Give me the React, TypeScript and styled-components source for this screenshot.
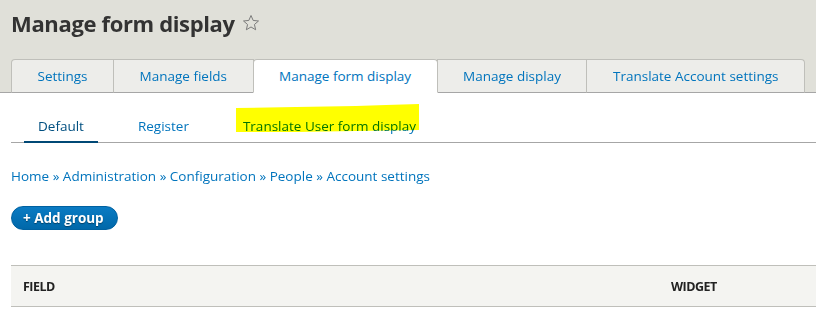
import React from "react";
import styled, { createGlobalStyle } from "styled-components";

const Global = createGlobalStyle`
  html, body { margin: 0; padding: 0; background: #fff; }
  body { font-family: "Open Sans", "Noto Sans", sans-serif; color: #333; }
  * { box-sizing: border-box; }
`;

const Page = styled.div`
  width: 816px;
  height: 320px;
  overflow: hidden;
  background: #fff;
`;

const Header = styled.header`
  background: #e0e0d9;
  border-bottom: 1px solid #a6a6a6;
  padding: 8px 0 0 11px;
`;

const TitleRow = styled.div`
  display: flex;
  align-items: center;
  gap: 7px;
  height: 30px;
`;

const Title = styled.h1`
  margin: 0;
  font-size: 22px;
  font-weight: 700;
  color: #333;
  letter-spacing: -0.35px;
`;

const PrimaryTabs = styled.ul`
  display: flex;
  list-style: none;
  margin: 21px 0 -1px 0;
  padding: 0;
`;

const PrimaryTab = styled.li<{ $active?: boolean; $first?: boolean; $last?: boolean }>`
  height: 34px;
  display: flex;
  align-items: center;
  justify-content: center;
  padding: 0 25.5px;
  font-size: 13.5px;
  color: #0074bd;
  background: ${(p) => (p.$active ? "#fff" : "#ededea")};
  border: 1px solid #bfbfba;
  border-bottom: ${(p) => (p.$active ? "1px solid #fff" : "1px solid #a6a6a6")};
  margin-left: ${(p) => (p.$first ? "0" : "-1px")};
  border-top-left-radius: ${(p) => (p.$first || p.$active ? "4px" : "0")};
  border-top-right-radius: ${(p) => (p.$last || p.$active ? "4px" : "0")};
  position: relative;
  z-index: ${(p) => (p.$active ? 1 : 0)};
`;

const Secondary = styled.ul`
  display: flex;
  list-style: none;
  margin: 0 0 0 11px;
  padding: 0 0 0 13px;
  gap: 26px;
  height: 50px;
  border-bottom: 1px solid #a6a6a6;
`;

const SecondaryTab = styled.li<{ $active?: boolean }>`
  position: relative;
  display: flex;
  align-items: center;
  padding: 18px 14px 0;
  font-size: 13.5px;
  color: ${(p) => (p.$active ? "#004f80" : "#0074bd")};
  border-bottom: ${(p) => (p.$active ? "2px solid #004875" : "2px solid transparent")};
  margin-bottom: -1px;
`;

const Highlight = styled.svg`
  position: absolute;
  left: 7px;
  top: 11px;
  width: 184px;
  height: 30px;
  mix-blend-mode: multiply;
  pointer-events: none;
`;

const Content = styled.div`
  padding: 0 0 0 11px;
`;

const Breadcrumb = styled.nav`
  margin-top: 24px;
  font-size: 13.5px;
  color: #0074bd;
  height: 18px;
  line-height: 18px;
`;

const Button = styled.button`
  margin-top: 21px;
  height: 24px;
  padding: 0 13px 1px 11px;
  border: 1px solid #0061a0;
  border-radius: 12px;
  background: linear-gradient(#0a7bc3, #0068a9);
  color: #fff;
  font-family: "Open Sans", sans-serif;
  font-weight: 700;
  font-size: 13.5px;
  text-shadow: 0 1px 1px rgba(0,0,0,0.4);
  display: flex;
  align-items: center;
  gap: 3px;
`;

const Table = styled.div`
  margin-top: 35px;
  height: 42px;
  background: #f4f4f1;
  border-top: 1px solid #bfbfba;
  border-bottom: 1px solid #bfbfba;
  display: grid;
  grid-template-columns: 648px 1fr;
  align-items: center;
  padding-left: 12px;
`;

const Th = styled.span`
  font-family: "Open Sans", sans-serif;
  font-weight: 700;
  font-size: 12.5px;
  letter-spacing: -0.5px;
  color: #222;
  text-transform: uppercase;
`;

const Star = () => (
  <svg width="18" height="18" viewBox="0 0 24 24" fill="none" stroke="#777" strokeWidth="1.3" strokeLinejoin="round">
    <polygon points="12,2 14.9,8.6 22,9.3 16.6,14 18.2,21 12,17.3 5.8,21 7.4,14 2,9.3 9.1,8.6" />
  </svg>
);

export default function App() {
  return (
    <Page>
      <Global />
      <Header>
        <TitleRow>
          <Title>Manage form display</Title>
          <Star />
        </TitleRow>
        <PrimaryTabs>
          <PrimaryTab $first>Settings</PrimaryTab>
          <PrimaryTab>Manage fields</PrimaryTab>
          <PrimaryTab $active>Manage form display</PrimaryTab>
          <PrimaryTab>Manage display</PrimaryTab>
          <PrimaryTab $last>Translate Account settings</PrimaryTab>
        </PrimaryTabs>
      </Header>
      <Secondary>
        <SecondaryTab $active>Default</SecondaryTab>
        <SecondaryTab>Register</SecondaryTab>
        <SecondaryTab>
          Translate User form display
          <Highlight viewBox="0 0 184 30" preserveAspectRatio="none">
            <path d="M0 4 L60 3 L120 2 L150 1 L183 0 L183 26 L120 27 L60 28 L0 28 Z" fill="#ffff00" />
          </Highlight>
        </SecondaryTab>
      </Secondary>
      <Content>
        <Breadcrumb>Home » Administration » Configuration » People » Account settings</Breadcrumb>
        <Button>+ Add group</Button>
        <Table>
          <Th>Field</Th>
          <Th>Widget</Th>
        </Table>
      </Content>
    </Page>
  );
}
